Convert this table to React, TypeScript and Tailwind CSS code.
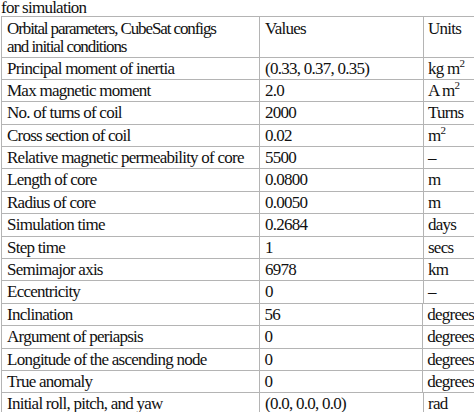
import React from "react";

const Sq = () => <sup className="text-[11px] relative -top-[7px] tracking-normal">2</sup>;

const rows: [string, string, React.ReactNode][] = [
  ["Principal moment of inertia", "(0.33, 0.37, 0.35)", <>kg m<Sq /></>],
  ["Max magnetic moment", "2.0", <>A m<Sq /></>],
  ["No. of turns of coil", "2000", "Turns"],
  ["Cross section of coil", "0.02", <>m<Sq /></>],
  ["Relative magnetic permeability of core", "5500", "–"],
  ["Length of core", "0.0800", "m"],
  ["Radius of core", "0.0050", "m"],
  ["Simulation time", "0.2684", "days"],
  ["Step time", "1", "secs"],
  ["Semimajor axis", "6978", "km"],
  ["Eccentricity", "0", "–"],
  ["Inclination", "56", "degrees"],
  ["Argument of periapsis", "0", "degrees"],
  ["Longitude of the ascending node", "0", "degrees"],
  ["True anomaly", "0", "degrees"],
  ["Initial roll, pitch, and yaw", "(0.0, 0.0, 0.0)", "rad"],
];

const App = () => {
  return (
    <div className="w-[474px] h-[412px] overflow-hidden bg-white text-[#111] font-['Liberation_Serif',serif] text-[17px] tracking-[-0.75px]">
      <div className="h-[16px] leading-[16px] pl-[1px] whitespace-nowrap">for simulation</div>
      <div className="ml-[1px] border-l-[1.5px] border-[#b4b4b4]">
        <div className="flex h-[41.5px] border-y-[1.5px] border-[#b4b4b4] leading-[18px]">
          <div className="w-[257px] pl-[5px] pt-[3px] tracking-[-1.1px]">
            Orbital parameters, CubeSat configs
            <br />
            and initial conditions
          </div>
          <div className="w-[164px] border-l-[1.5px] border-[#b4b4b4] pl-[5px] pt-[3px]">Values</div>
          <div className="flex-1 border-l-[1.5px] border-[#b4b4b4] pl-[4px] pt-[3px] whitespace-nowrap">Units</div>
        </div>
        {rows.map(([name, value, unit], i) => (
          <div
            key={i}
            className="flex h-[22.4px] border-b-[1.5px] border-[#b4b4b4] leading-[21px] whitespace-nowrap"
          >
            <div className="w-[257px] pl-[5px]">{name}</div>
            <div className="w-[164px] border-l-[1.5px] border-[#b4b4b4] pl-[5px]">{value}</div>
            <div className="flex-1 border-l-[1.5px] border-[#b4b4b4] pl-[4px]">{unit}</div>
          </div>
        ))}
      </div>
    </div>
  );
};

export default App;
